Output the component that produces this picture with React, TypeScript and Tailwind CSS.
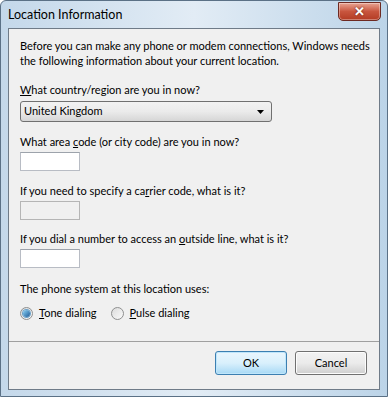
import React, { useState } from 'react';

const font = { fontFamily: 'Lato, "Noto Sans", sans-serif' };

const Field: React.FC<{ disabled?: boolean }> = ({ disabled }) => (
  <div
    className={`w-[60px] h-[19px] border ${disabled ? 'bg-[#f0f0f0] border-[#b5b5b5]' : 'bg-white border-[#b8bcc4] border-t-[#9da3ab]'}`}
  />
);

const Radio: React.FC<{ checked: boolean; label: React.ReactNode; onClick: () => void }> = ({ checked, label, onClick }) => (
  <button onClick={onClick} className="flex items-center gap-[6px] text-left">
    <span className="w-[13px] h-[13px] rounded-full border border-[#8e8f8f] bg-gradient-to-br from-[#dcdcdc] to-[#fafafa] flex items-center justify-center">
      {checked && <span className="w-[7px] h-[7px] rounded-full bg-gradient-to-br from-[#8ad3f7] to-[#1e5b96] shadow-[0_0_0_1px_#6aa1c9]" />}
    </span>
    <span>{label}</span>
  </button>
);

export default function App() {
  const [tone, setTone] = useState(true);

  return (
    <div
      className="w-[388px] h-[397px] bg-gradient-to-r from-[#c4d8ea] via-[#e2ecf5] to-[#bcd4e8] border border-[#5b7186] rounded-t-[6px] flex flex-col overflow-hidden text-[11px] text-black"
      style={font}
    >
      <div className="h-[27px] flex items-start justify-between pl-[7px] pr-[6px]">
        <span className="mt-[5px] text-[12.5px] text-black">Location Information</span>
        <button className="w-[43px] h-[19px] mt-[1px] rounded-b-[5px] border border-[#6d2a22] bg-gradient-to-b from-[#e8a493] via-[#c8553e] to-[#b33b23] flex items-center justify-center text-white text-[13px] font-bold leading-none shadow-[inset_0_0_0_1px_rgba(255,255,255,0.35)] [text-shadow:0_0_2px_#5a1a10]">
          ✕
        </button>
      </div>
      <div className="flex-1 mx-[7px] mb-[6px] border border-[#6f7b88] bg-[#f0f0f0] flex flex-col">
        <div className="flex-1 px-[11px] pt-[9px] flex flex-col">
          <p className="leading-[15px] whitespace-nowrap">
            Before you can make any phone or modem connections, Windows needs<br />
            the following information about your current location.
          </p>
          <p className="mt-[14px] leading-[15px]">
            <u>W</u>hat country/region are you in now?
          </p>
          <div className="mt-[4px] w-[252px] h-[21px] border border-[#707070] rounded-[3px] bg-gradient-to-b from-[#f2f2f2] via-[#ebebeb] to-[#d6d6d6] flex items-center justify-between pl-[3px] pr-[7px]">
            <span>United Kingdom</span>
            <svg width="7" height="4" viewBox="0 0 7 4"><path d="M0 0h7L3.5 4z" fill="#000" /></svg>
          </div>
          <p className="mt-[12px] leading-[15px]">
            What area <u>c</u>ode (or city code) are you in now?
          </p>
          <div className="mt-[3px]"><Field /></div>
          <p className="mt-[12px] leading-[15px]">
            If you need to specify a ca<u>r</u>rier code, what is it?
          </p>
          <div className="mt-[3px]"><Field disabled /></div>
          <p className="mt-[11px] leading-[15px]">
            If you dial a number to access an <u>o</u>utside line, what is it?
          </p>
          <div className="mt-[3px]"><Field /></div>
          <p className="mt-[13px] leading-[15px]">The phone system at this location uses:</p>
          <div className="mt-[9px] flex gap-[14px]">
            <Radio checked={tone} onClick={() => setTone(true)} label={<><u>T</u>one dialing</>} />
            <Radio checked={!tone} onClick={() => setTone(false)} label={<><u>P</u>ulse dialing</>} />
          </div>
        </div>
        <div className="h-[48px] border-t border-[#a0a0a0] flex items-start justify-end gap-[8px] pr-[12px] pt-[9px]">
          <button className="w-[72px] h-[24px] rounded-[3px] border border-[#3c7fb1] bg-gradient-to-b from-[#eaf6fd] via-[#d9f0fc] to-[#a7d9f5] shadow-[inset_0_0_0_1px_#bfe6fb]">
            OK
          </button>
          <button className="w-[72px] h-[24px] rounded-[3px] border border-[#707070] bg-gradient-to-b from-[#f2f2f2] via-[#ebebeb] to-[#cfcfcf] shadow-[inset_0_0_0_1px_#fcfcfc]">
            Cancel
          </button>
        </div>
      </div>
    </div>
  );
}
